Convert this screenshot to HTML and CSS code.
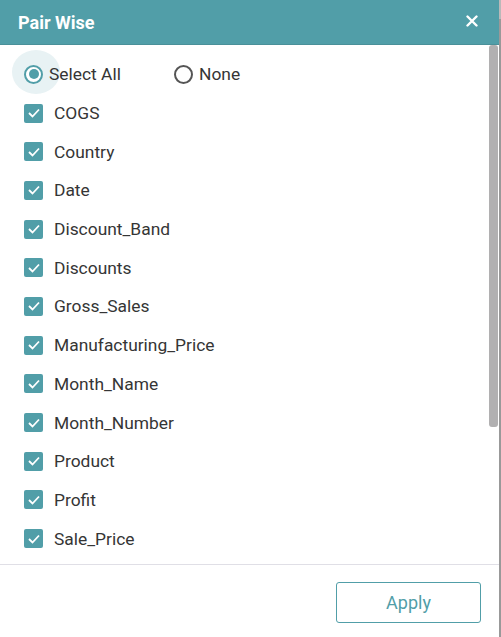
FILE: index.html
```html
<!DOCTYPE html>
<html>
<head>
<meta charset="utf-8">
<link rel="stylesheet" href="styles.css">
</head>
<body>
<div class="page">
  <div class="dialog">
    <div class="header">
      <span class="title">Pair Wise</span>
      <svg class="close" width="12" height="12" viewBox="0 0 12 12"><path d="M1.5 1.5 L10.5 10.5 M10.5 1.5 L1.5 10.5" stroke="#fff" stroke-width="2.4" stroke-linecap="round"/></svg>
    </div>
    <div class="content">
      <div class="row radios">
        <label class="radio checked"><span class="ripple"></span><span class="circle"></span><span class="rlabel">Select All</span></label>
        <label class="radio"><span class="circle"></span><span class="rlabel">None</span></label>
      </div>
      <div class="row"><span class="box"><svg width="12" height="10" viewBox="0 0 12 10"><path d="M1 5 L4.5 8.5 L11 1.5" fill="none" stroke="#fff" stroke-width="1.8"/></svg></span><span class="text">COGS</span></div>
      <div class="row"><span class="box"><svg width="12" height="10" viewBox="0 0 12 10"><path d="M1 5 L4.5 8.5 L11 1.5" fill="none" stroke="#fff" stroke-width="1.8"/></svg></span><span class="text">Country</span></div>
      <div class="row"><span class="box"><svg width="12" height="10" viewBox="0 0 12 10"><path d="M1 5 L4.5 8.5 L11 1.5" fill="none" stroke="#fff" stroke-width="1.8"/></svg></span><span class="text">Date</span></div>
      <div class="row"><span class="box"><svg width="12" height="10" viewBox="0 0 12 10"><path d="M1 5 L4.5 8.5 L11 1.5" fill="none" stroke="#fff" stroke-width="1.8"/></svg></span><span class="text">Discount_Band</span></div>
      <div class="row"><span class="box"><svg width="12" height="10" viewBox="0 0 12 10"><path d="M1 5 L4.5 8.5 L11 1.5" fill="none" stroke="#fff" stroke-width="1.8"/></svg></span><span class="text">Discounts</span></div>
      <div class="row"><span class="box"><svg width="12" height="10" viewBox="0 0 12 10"><path d="M1 5 L4.5 8.5 L11 1.5" fill="none" stroke="#fff" stroke-width="1.8"/></svg></span><span class="text">Gross_Sales</span></div>
      <div class="row"><span class="box"><svg width="12" height="10" viewBox="0 0 12 10"><path d="M1 5 L4.5 8.5 L11 1.5" fill="none" stroke="#fff" stroke-width="1.8"/></svg></span><span class="text">Manufacturing_Price</span></div>
      <div class="row"><span class="box"><svg width="12" height="10" viewBox="0 0 12 10"><path d="M1 5 L4.5 8.5 L11 1.5" fill="none" stroke="#fff" stroke-width="1.8"/></svg></span><span class="text">Month_Name</span></div>
      <div class="row"><span class="box"><svg width="12" height="10" viewBox="0 0 12 10"><path d="M1 5 L4.5 8.5 L11 1.5" fill="none" stroke="#fff" stroke-width="1.8"/></svg></span><span class="text">Month_Number</span></div>
      <div class="row"><span class="box"><svg width="12" height="10" viewBox="0 0 12 10"><path d="M1 5 L4.5 8.5 L11 1.5" fill="none" stroke="#fff" stroke-width="1.8"/></svg></span><span class="text">Product</span></div>
      <div class="row"><span class="box"><svg width="12" height="10" viewBox="0 0 12 10"><path d="M1 5 L4.5 8.5 L11 1.5" fill="none" stroke="#fff" stroke-width="1.8"/></svg></span><span class="text">Profit</span></div>
      <div class="row"><span class="box"><svg width="12" height="10" viewBox="0 0 12 10"><path d="M1 5 L4.5 8.5 L11 1.5" fill="none" stroke="#fff" stroke-width="1.8"/></svg></span><span class="text">Sale_Price</span></div>
      <div class="thumb"></div>
    </div>
    <div class="footer">
      <button class="apply">Apply</button>
    </div>
  </div>
  <div class="edge"><div class="edge-top"></div><div class="edge-rest"></div></div>
</div>
</body>
</html>
```
FILE: styles.css
```css
html, body {
  margin: 0;
  padding: 0;
  height: 100%;
}
body {
  font-family: Roboto, "Liberation Sans", sans-serif;
  background: #9a9a9a;
  overflow: hidden;
}
.page {
  display: flex;
  height: 637px;
}
.dialog {
  width: 499px;
  height: 637px;
  background: #fff;
  display: flex;
  flex-direction: column;
}
.edge {
  width: 2px;
  display: flex;
  flex-direction: column;
}
.edge-top {
  height: 19px;
  background: #b9b9b9;
}
.edge-rest {
  flex: 1;
  background: #999;
}
.header {
  height: 44px;
  flex: 0 0 44px;
  background: #519ea8;
  border-bottom: 1px solid #4a9099;
  display: flex;
  align-items: center;
  justify-content: space-between;
  padding: 0 21px 0 18px;
}
.title {
  color: #fff;
  font-weight: bold;
  font-size: 18px;
  margin-top: 1px;
}
.close {
  display: block;
  margin-top: -3px;
}
.content {
  position: relative;
  flex: 1;
  overflow: hidden;
  padding: 10px 0 0 0;
  box-sizing: border-box;
}
.thumb {
  position: absolute;
  right: 1px;
  top: 0;
  width: 9px;
  height: 382px;
  background: #b1b0b1;
  border-radius: 3px;
}
.row {
  height: 38.7px;
  display: flex;
  align-items: center;
  padding-left: 24px;
  color: #353535;
  font-size: 17.4px;
}
.radio {
  position: relative;
  display: flex;
  align-items: center;
  width: 150px;
}
.ripple {
  position: absolute;
  left: -12px;
  top: -14px;
  width: 48px;
  height: 44px;
  border-radius: 50%;
  background: #e8f2f4;
}
.circle {
  position: relative;
  width: 19px;
  height: 19px;
  box-sizing: border-box;
  border: 2px solid #555;
  border-radius: 50%;
  background: #fff;
}
.checked .circle {
  border-color: #519ea8;
}
.checked .circle::after {
  content: "";
  position: absolute;
  left: 2.5px;
  top: 2.5px;
  width: 10px;
  height: 10px;
  border-radius: 50%;
  background: #519ea8;
}
.rlabel {
  position: relative;
  margin-left: 6px;
}
.box {
  width: 19px;
  height: 19px;
  border-radius: 2px;
  background: #519ea8;
  display: flex;
  align-items: center;
  justify-content: center;
}
.text {
  margin-left: 11px;
}
.footer {
  flex: 0 0 auto;
  height: 73px;
  border-top: 1px solid #e0dfe6;
  display: flex;
  justify-content: flex-end;
  padding: 17px 18px 0 0;
  box-sizing: border-box;
}
.apply {
  width: 145px;
  height: 41px;
  background: #fff;
  border: 1px solid #519ea8;
  border-radius: 3px;
  color: #519ea8;
  font-family: Roboto, "Liberation Sans", sans-serif;
  font-size: 18px;
}
```
